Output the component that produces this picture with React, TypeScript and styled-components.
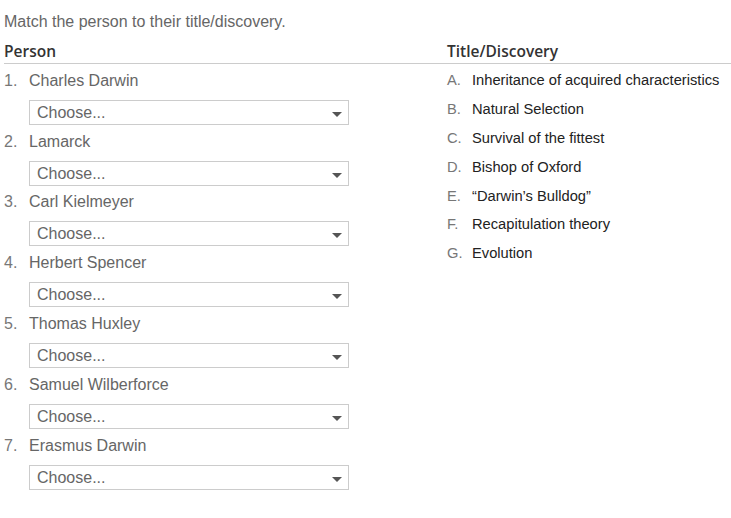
import styled, { createGlobalStyle } from 'styled-components';

const GlobalStyle = createGlobalStyle`
  html, body {
    margin: 0;
    padding: 0;
    background: #ffffff;
  }
  body {
    font-family: "Liberation Sans", Arial, sans-serif;
  }
`;

const people = [
  'Charles Darwin',
  'Lamarck',
  'Carl Kielmeyer',
  'Herbert Spencer',
  'Thomas Huxley',
  'Samuel Wilberforce',
  'Erasmus Darwin',
];

const answers = [
  'Inheritance of acquired characteristics',
  'Natural Selection',
  'Survival of the fittest',
  'Bishop of Oxford',
  '\u201CDarwin\u2019s Bulldog\u201D',
  'Recapitulation theory',
  'Evolution',
];

const Page = styled.div`
  padding: 12px 0 0 4px;
  width: 727px;
`;

const Prompt = styled.p`
  margin: 0 0 9px;
  font-size: 16px;
  line-height: 20px;
  color: #666666;
`;

const HeaderRow = styled.div`
  display: grid;
  grid-template-columns: 443px 1fr;
  border-bottom: 1px solid #cccccc;
  padding-bottom: 2px;
`;

const ColumnTitle = styled.h3`
  margin: 0;
  font-family: "Open Sans", "Liberation Sans", sans-serif;
  font-size: 15.5px;
  font-weight: 600;
  line-height: 20px;
  color: #333333;
`;

const Body = styled.div`
  display: grid;
  grid-template-columns: 443px 1fr;
`;

const PersonList = styled.ol`
  list-style: none;
  margin: 0;
  padding: 0;
`;

const PersonItem = styled.li`
  padding-top: 6.83px;
`;

const Label = styled.div`
  display: flex;
  font-size: 16px;
  line-height: 20px;
  color: #666666;
`;

const Marker = styled.span<{ $tone?: string }>`
  width: 25px;
  flex: none;
  color: ${(p) => p.$tone ?? '#777777'};
`;

const SelectWrap = styled.div`
  position: relative;
  margin: 9px 0 0 25px;
  width: 320px;
  height: 25px;
`;

const Select = styled.select`
  appearance: none;
  -webkit-appearance: none;
  box-sizing: border-box;
  width: 100%;
  height: 100%;
  margin: 0;
  padding: 0 24px 0 7px;
  border: 1px solid #cccccc;
  border-radius: 0;
  background: #ffffff;
  font-family: "Liberation Sans", Arial, sans-serif;
  font-size: 16px;
  color: #666666;
  outline: none;
`;

const Arrow = styled.svg`
  position: absolute;
  right: 7px;
  top: 12px;
  pointer-events: none;
`;

const AnswerList = styled.ol`
  list-style: none;
  margin: 0;
  padding: 6px 0 0;
`;

const AnswerItem = styled.li`
  display: flex;
  font-size: 14.7px;
  line-height: 20px;
  color: #222222;
  & + & {
    margin-top: 8.9px;
  }
`;

export default function App() {
  return (
    <Page>
      <GlobalStyle />
      <Prompt>Match the person to their title/discovery.</Prompt>
      <HeaderRow>
        <ColumnTitle>Person</ColumnTitle>
        <ColumnTitle>Title/Discovery</ColumnTitle>
      </HeaderRow>
      <Body>
        <PersonList>
          {people.map((name, i) => (
            <PersonItem key={name}>
              <Label>
                <Marker $tone="#777777">{i + 1}.</Marker>
                {name}
              </Label>
              <SelectWrap>
                <Select defaultValue="">
                  <option value="">Choose...</option>
                  {answers.map((a, j) => (
                    <option key={a} value={String.fromCharCode(65 + j)}>
                      {String.fromCharCode(65 + j)}
                    </option>
                  ))}
                </Select>
                <Arrow width="10" height="5" viewBox="0 0 10 5">
                  <path d="M0 0 H10 L5 5 Z" fill="#555555" />
                </Arrow>
              </SelectWrap>
            </PersonItem>
          ))}
        </PersonList>
        <AnswerList>
          {answers.map((a, j) => (
            <AnswerItem key={a}>
              <Marker>{String.fromCharCode(65 + j)}.</Marker>
              {a}
            </AnswerItem>
          ))}
        </AnswerList>
      </Body>
    </Page>
  );
}
